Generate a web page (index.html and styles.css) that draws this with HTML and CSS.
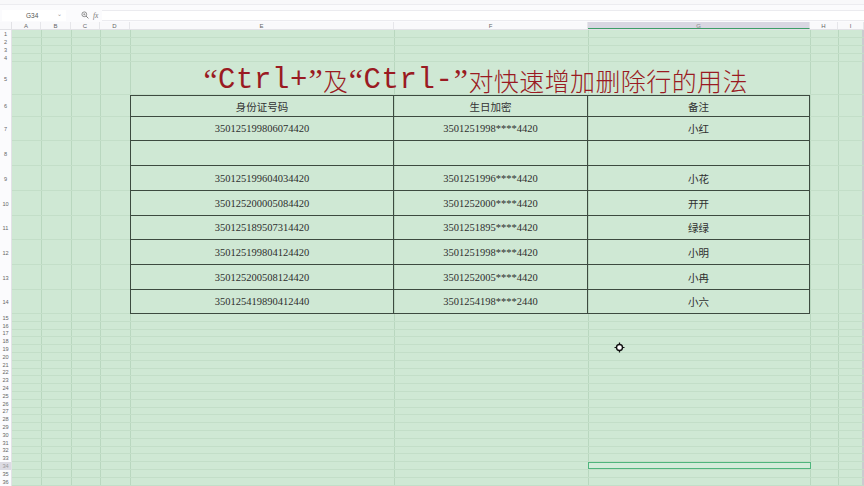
FILE: index.html
```html
<!DOCTYPE html>
<html lang="zh">
<head>
<meta charset="utf-8">
<title>Ctrl+ Ctrl-</title>
<link rel="stylesheet" href="styles.css">
</head>
<body>
<div class="top">
  <div class="strip"></div>
  <div class="fbar">
    <div class="namebox"><span class="nm">G34</span><span class="caret">&#8964;</span></div>
    <svg class="mag" width="8" height="8" viewBox="0 0 8 8"><circle cx="3.3" cy="3.3" r="2.4" fill="none" stroke="#777" stroke-width="0.8"/><path d="M5 5 L7.4 7.4" stroke="#777" stroke-width="0.9"/><path d="M2.2 3.3h2.2M3.3 2.2v2.2" stroke="#777" stroke-width="0.6"/></svg>
    <span class="fx">fx</span>
    <div class="finput"></div>
  </div>
</div>
<div class="colheads">
  <div class="corner"></div>
  <div class="chc ca">A</div>
  <div class="chc cb">B</div>
  <div class="chc cc">C</div>
  <div class="chc cd">D</div>
  <div class="chc ce">E</div>
  <div class="chc cf">F</div>
  <div class="chc cg on">G</div>
  <div class="chc chh">H</div>
  <div class="chc ci">I</div>
</div>
<div class="sheet">
  <div class="row r8"><div class="rh">1</div><div class="rc"></div></div>
  <div class="row r8"><div class="rh">2</div><div class="rc"></div></div>
  <div class="row r8"><div class="rh">3</div><div class="rc"></div></div>
  <div class="row r8"><div class="rh">4</div><div class="rc"></div></div>
  <div class="row r33"><div class="rh">5</div><div class="rc title"><span class="q">“</span><span class="lat">Ctrl+</span><span class="q">”</span><span class="cjk">及</span><span class="q">“</span><span class="lat">Ctrl-</span><span class="q">”</span><span class="cjk">对快速增加删除行的用法</span></div></div>
  <div class="row r22"><div class="rh">6</div><div class="rc t"><div class="pad"></div><div class="td e first hd">身份证号码</div><div class="td f first hd">生日加密</div><div class="td g first hd">备注</div><div class="tail"></div></div></div>
  <div class="row r24"><div class="rh">7</div><div class="rc t"><div class="pad"></div><div class="td e">350125199806074420</div><div class="td f">3501251998****4420</div><div class="td g cn">小红</div><div class="tail"></div></div></div>
  <div class="row r25"><div class="rh">8</div><div class="rc t"><div class="pad"></div><div class="td e"></div><div class="td f"></div><div class="td g"></div><div class="tail"></div></div></div>
  <div class="row r25"><div class="rh">9</div><div class="rc t"><div class="pad"></div><div class="td e">350125199604034420</div><div class="td f">3501251996****4420</div><div class="td g cn">小花</div><div class="tail"></div></div></div>
  <div class="row r25"><div class="rh">10</div><div class="rc t"><div class="pad"></div><div class="td e">350125200005084420</div><div class="td f">3501252000****4420</div><div class="td g cn">开开</div><div class="tail"></div></div></div>
  <div class="row r24"><div class="rh">11</div><div class="rc t"><div class="pad"></div><div class="td e">350125189507314420</div><div class="td f">3501251895****4420</div><div class="td g cn">绿绿</div><div class="tail"></div></div></div>
  <div class="row r25"><div class="rh">12</div><div class="rc t"><div class="pad"></div><div class="td e">350125199804124420</div><div class="td f">3501251998****4420</div><div class="td g cn">小明</div><div class="tail"></div></div></div>
  <div class="row r25"><div class="rh">13</div><div class="rc t"><div class="pad"></div><div class="td e">350125200508124420</div><div class="td f">3501252005****4420</div><div class="td g cn">小冉</div><div class="tail"></div></div></div>
  <div class="row r24"><div class="rh">14</div><div class="rc t"><div class="pad"></div><div class="td e">350125419890412440</div><div class="td f">3501254198****2440</div><div class="td g cn">小六</div><div class="tail"></div></div></div>
  <div class="row rs"><div class="rh">15</div><div class="rc"></div></div>
  <div class="row rs"><div class="rh">16</div><div class="rc"></div></div>
  <div class="row rs"><div class="rh">17</div><div class="rc"></div></div>
  <div class="row rs"><div class="rh">18</div><div class="rc"></div></div>
  <div class="row rs"><div class="rh">19</div><div class="rc"></div></div>
  <div class="row rs"><div class="rh">20</div><div class="rc"></div></div>
  <div class="row rs"><div class="rh">21</div><div class="rc"></div></div>
  <div class="row rs"><div class="rh">22</div><div class="rc"></div></div>
  <div class="row rs"><div class="rh">23</div><div class="rc"></div></div>
  <div class="row rs"><div class="rh">24</div><div class="rc"></div></div>
  <div class="row rs"><div class="rh">25</div><div class="rc"></div></div>
  <div class="row rs"><div class="rh">26</div><div class="rc"></div></div>
  <div class="row rs"><div class="rh">27</div><div class="rc"></div></div>
  <div class="row rs"><div class="rh">28</div><div class="rc"></div></div>
  <div class="row rs"><div class="rh">29</div><div class="rc"></div></div>
  <div class="row rs"><div class="rh">30</div><div class="rc"></div></div>
  <div class="row rs"><div class="rh">31</div><div class="rc"></div></div>
  <div class="row rs"><div class="rh">32</div><div class="rc"></div></div>
  <div class="row rs"><div class="rh">33</div><div class="rc"></div></div>
  <div class="row rs"><div class="rh act">34</div><div class="rc selrow"><div class="selpad"></div><div class="sel"></div></div></div>
  <div class="row rs"><div class="rh">35</div><div class="rc"></div></div>
  <div class="row rs"><div class="rh">36</div><div class="rc"></div></div>
  <svg class="cursor" width="11" height="11" viewBox="0 0 11 11"><circle cx="5.5" cy="5.5" r="3" fill="#fff" stroke="#111" stroke-width="1.4"/><path d="M5.5 0.5v2M5.5 8.5v2M0.5 5.5h2M8.5 5.5h2" stroke="#111" stroke-width="1.2"/></svg>
</div>
</body>
</html>
```

FILE: styles.css
```css
* { box-sizing: border-box; }
html, body { margin: 0; padding: 0; }
body {
  width: 864px;
  height: 486px;
  overflow: hidden;
  background: #ffffff;
  font-family: "Liberation Serif", "Noto Sans CJK SC", serif;
  color: #2b2b2b;
}

/* top formula bar */
.top { height: 22px; background: #fbfbfd; }
.strip { height: 5px; border-bottom: 1px solid #ececf0; background: #f8f8fa; }
.fbar { display: flex; align-items: center; height: 12px; margin-top: 4px; }
.namebox {
  width: 64px; height: 11px; margin-left: 2px;
  display: flex; align-items: center; justify-content: space-between;
  font-family: "Liberation Sans", sans-serif; font-size: 6.5px; color: #555;
  padding: 0 4px 0 24px;
  background: #fff;
}
.caret { font-size: 6px; color: #999; line-height: 1; margin-top: -3px; }
.mag { margin-left: 15px; }
.fx { font-family: "Liberation Serif", serif; font-style: italic; font-size: 7.5px; color: #777; margin-left: 4px; }
.finput { flex: 1; height: 11px; margin-left: 4px; background: #fff; border-top: 1px solid #ebebef; border-bottom: 1px solid #ebebef; }

/* column headers */
.colheads { display: flex; height: 8px; background: #f9f9fb; border-bottom: 1px solid #e2e2e6; }
.corner { width: 12px; border-right: 1px solid #e2e2e6; }
.chc {
  border-right: 1px solid #e6e6ea;
  font-family: "Liberation Sans", sans-serif; font-size: 6px; color: #666;
  text-align: center; line-height: 8px;
}
.ca { width: 29px; }
.cb { width: 30px; }
.cc { width: 29px; }
.cd { width: 30px; }
.ce { width: 264px; }
.cf { width: 194px; }
.cg { width: 222px; }
.chh { width: 28px; }
.ci { width: 26px; }
.chc.on { background: #d9d7e2; border-bottom: 1px solid #3f9e68; color: #888; }

/* sheet */
.sheet {
  position: relative;
  background-color: #cfe8d4;
  background-image: linear-gradient(to right,
    transparent 41px, #b9d7bf 41px, #b9d7bf 42px,
    transparent 42px, transparent 71px, #b9d7bf 71px, #b9d7bf 72px,
    transparent 72px, transparent 100px, #b9d7bf 100px, #b9d7bf 101px,
    transparent 101px, transparent 130px, #b9d7bf 130px, #b9d7bf 131px,
    transparent 131px, transparent 394px, #b9d7bf 394px, #b9d7bf 395px,
    transparent 395px, transparent 588px, #b9d7bf 588px, #b9d7bf 589px,
    transparent 589px, transparent 810px, #b9d7bf 810px, #b9d7bf 811px,
    transparent 811px, transparent 838px, #b9d7bf 838px, #b9d7bf 839px,
    transparent 839px, transparent 862px, #c9ccd0 862px, #c9ccd0 864px);
  height: 456px;
  overflow: hidden;
}
.row { display: flex; }
.r8 { height: 8px; }
.r33 { height: 33px; }
.r22 { height: 22px; }
.r24 { height: 24px; }
.r25 { height: 25px; }
.rs { height: 7.8px; }
.rh {
  width: 12px; flex: none;
  background: #fbfbfd;
  border-right: 1px solid #e2e2e6;
  font-family: "Liberation Sans", sans-serif; font-size: 5.6px; color: #666;
  display: flex; align-items: center; justify-content: center;
}
.rh.act { background: #dcdbe3; color: #999; }
.rc { flex: 1; border-bottom: 1px solid #c3dec8; display: flex; }

/* title */
.title {
  align-items: flex-end;
  padding-left: 191px;
  padding-bottom: 1px;
  color: #9a1a22;
  font-size: 25px;
  line-height: 25px;
  white-space: nowrap;
}
.title .q {
  display: inline-block; width: 15px; text-align: center;
  font-family: "Liberation Serif", serif; font-size: 32px;
}
.title .lat { font-family: "Liberation Mono", monospace; font-size: 29px; letter-spacing: 0.6px; }
.title .cjk { font-family: "Noto Sans CJK SC", sans-serif; font-weight: 300; letter-spacing: 0.4px; }

/* table */
.rc.t { border-bottom: none; }
.pad { width: 118px; border-bottom: 1px solid #c3dec8; }
.tail { flex: 1; border-bottom: 1px solid #c3dec8; }
.td {
  height: 100%;
  border-right: 1px solid #3d4a40;
  border-bottom: 1px solid #3d4a40;
  display: flex; align-items: center; justify-content: center;
  font-size: 10.5px;
  color: #2e2e2e;
}
.td.e { width: 264px; border-left: 1px solid #3d4a40; }
.td.f { width: 194px; border-left: none; }
.td.g { width: 222px; }
.td.first { border-top: 1px solid #3d4a40; }
.td.hd { font-family: "Noto Sans CJK SC", sans-serif; font-size: 10.5px; color: #333; }
.td.cn { font-family: "Noto Sans CJK SC", sans-serif; font-size: 10.5px; }

/* selection */
.selrow { align-items: stretch; }
.selpad { width: 576px; }
.sel { width: 223px; border: 1.5px solid #4fb57c; background: #d3ecda; }

.cursor { position: absolute; left: 614px; top: 312px; }
```
